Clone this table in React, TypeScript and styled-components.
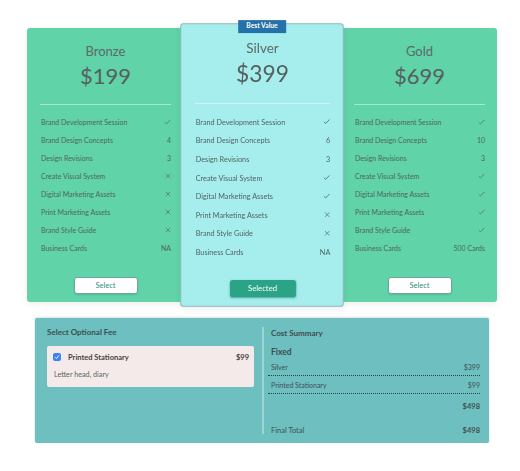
import React from "react";
import styled, { createGlobalStyle } from "styled-components";

const Global = createGlobalStyle`
  html, body { margin: 0; padding: 0; background: #fff; }
  body { font-family: Lato, "Open Sans", "Liberation Sans", sans-serif; }
  * { box-sizing: border-box; }
`;

const Page = styled.div`
  width: 520px;
  padding: 28px 23px 0 27px;
  display: flex;
  flex-direction: column;
`;

const Cards = styled.div`
  display: flex;
  width: 470px;
`;

const Card = styled.div<{ $featured?: boolean }>`
  position: relative;
  flex: 1 1 0;
  height: 274px;
  display: flex;
  flex-direction: column;
  padding: 0 12px 8px 13px;
  border-radius: 3px;
  background: ${(p) => (p.$featured ? "#a6edee" : "#60d3a9")};
  border: ${(p) => (p.$featured ? "1px solid #93b8bb" : "none")};
  box-shadow: 0 2px 6px rgba(0, 0, 0, 0.07);
  transform: ${(p) => (p.$featured ? "scale(1.035)" : "none")};
  z-index: ${(p) => (p.$featured ? 2 : 1)};
`;

const Badge = styled.div`
  position: absolute;
  top: -4px;
  left: 50%;
  transform: translateX(-50%);
  width: 46px;
  height: 12px;
  background: #2472a9;
  color: #fff;
  font-size: 6.5px;
  font-weight: 700;
  line-height: 12px;
  text-align: center;
`;

const Header = styled.div`
  display: flex;
  flex-direction: column;
  align-items: center;
  padding-top: 14px;
  padding-bottom: 13px;
  border-bottom: 1px solid rgba(255, 255, 255, 0.45);
`;

const Title = styled.div`
  font-size: 13px;
  line-height: 18px;
  color: #5b6a66;
`;

const Price = styled.div`
  font-size: 22px;
  line-height: 30px;
  margin-top: 1px;
  color: #56605e;
`;

const Features = styled.div`
  display: flex;
  flex-direction: column;
  padding-top: 8px;
`;

const Row = styled.div`
  display: flex;
  justify-content: space-between;
  align-items: center;
  height: 18px;
  font-size: 7px;
  color: #50665e;
  padding-left: 1px;
`;

const Value = styled.span`
  display: flex;
  align-items: center;
  justify-content: flex-end;
  min-width: 10px;
  color: #50665e;
`;

const ButtonRow = styled.div`
  margin-top: auto;
  display: flex;
  justify-content: center;
`;

const SelectButton = styled.button<{ $active?: boolean }>`
  width: 64px;
  height: 17px;
  border-radius: 3px;
  font-family: inherit;
  font-size: 7.5px;
  padding: 0;
  cursor: pointer;
  background: ${(p) => (p.$active ? "#2ba387" : "#fff")};
  color: ${(p) => (p.$active ? "#fff" : "#2a8f7d")};
  border: 1px solid ${(p) => (p.$active ? "#2ba387" : "#6aa8a0")};
  box-shadow: 0 1px 2px rgba(0, 0, 0, 0.12);
`;

const Panel = styled.div`
  margin: 16px 0 0 8px;
  width: 454px;
  height: 125px;
  background: #6dbfc0;
  border-radius: 2px;
  box-shadow: 0 -1px 2px rgba(0, 0, 0, 0.12), 0 1px 3px rgba(0, 0, 0, 0.08);
  padding: 8px 9px 8px 12px;
  display: grid;
  grid-template-columns: 207px 1fr;
  column-gap: 8px;
`;

const LeftCol = styled.div`
  display: flex;
  flex-direction: column;
`;

const RightCol = styled.div`
  display: flex;
  flex-direction: column;
  border-left: 2px solid rgba(255, 255, 255, 0.35);
  padding-left: 7px;
  margin-top: 1px;
  margin-bottom: 1px;
`;

const SectionTitle = styled.div`
  font-size: 8px;
  font-weight: 700;
  line-height: 12px;
  color: #3d4e4d;
`;

const FeeCard = styled.div`
  margin-top: 8px;
  background: #f4eaea;
  border-radius: 2px;
  padding: 4px 5px 4px 6px;
  height: 41px;
  display: flex;
  flex-direction: column;
`;

const FeeTop = styled.div`
  display: flex;
  align-items: center;
  height: 14px;
  font-size: 7.5px;
  font-weight: 700;
  color: #444;
`;

const Check = styled.span`
  width: 8px;
  height: 8px;
  border-radius: 2px;
  background: #3b82f6;
  display: inline-flex;
  align-items: center;
  justify-content: center;
  margin-right: 7px;
`;

const FeeName = styled.span`
  flex: 1;
`;

const FeeDesc = styled.div`
  margin-top: 6px;
  font-size: 7.2px;
  color: #5a6464;
  padding-left: 1px;
`;

const Fixed = styled.div`
  margin-top: 7px;
  font-size: 8.5px;
  font-weight: 700;
  line-height: 12px;
  color: #3d4e4d;
`;

const LineRow = styled.div<{ $h: number }>`
  display: flex;
  justify-content: space-between;
  align-items: flex-end;
  height: ${(p) => p.$h}px;
  padding: 0 0 3px 3px;
  margin-left: -3px;
  font-size: 7px;
  line-height: 9px;
  color: #3f5252;
  border-bottom: 1px dotted #2d4242;
`;

const TotalRow = styled.div<{ $h: number }>`
  display: flex;
  justify-content: space-between;
  align-items: center;
  height: ${(p) => p.$h}px;
  font-size: 7.5px;
  line-height: 9px;
  color: #3f5252;
`;

const Amount = styled.span`
  font-weight: 700;
`;

const Spacer = styled.div`
  flex: 1;
`;

const CheckIcon = () => (
  <svg width="7" height="6" viewBox="0 0 7 6">
    <path d="M0.8 3.2 L2.6 4.9 L6.2 1" fill="none" stroke="#5e7a70" strokeWidth="0.9" />
  </svg>
);

const CrossIcon = () => (
  <svg width="6" height="6" viewBox="0 0 6 6">
    <path d="M0.8 0.8 L5.2 5.2 M5.2 0.8 L0.8 5.2" fill="none" stroke="#5e7a70" strokeWidth="0.8" />
  </svg>
);

type V = "check" | "cross" | string;

const featureNames = [
  "Brand Development Session",
  "Brand Design Concepts",
  "Design Revisions",
  "Create Visual System",
  "Digital Marketing Assets",
  "Print Marketing Assets",
  "Brand Style Guide",
  "Business Cards",
];

const plans: { name: string; price: string; values: V[]; featured?: boolean }[] = [
  { name: "Bronze", price: "$199", values: ["check", "4", "3", "cross", "cross", "cross", "cross", "NA"] },
  { name: "Silver", price: "$399", values: ["check", "6", "3", "check", "check", "cross", "cross", "NA"], featured: true },
  { name: "Gold", price: "$699", values: ["check", "10", "3", "check", "check", "check", "check", "500 Cards"] },
];

const renderValue = (v: V) =>
  v === "check" ? <CheckIcon /> : v === "cross" ? <CrossIcon /> : v;

export default function App() {
  return (
    <>
      <Global />
      <Page>
        <Cards>
          {plans.map((p) => (
            <Card key={p.name} $featured={p.featured}>
              {p.featured && <Badge>Best Value</Badge>}
              <Header>
                <Title>{p.name}</Title>
                <Price>{p.price}</Price>
              </Header>
              <Features>
                {featureNames.map((f, i) => (
                  <Row key={f}>
                    <span>{f}</span>
                    <Value>{renderValue(p.values[i])}</Value>
                  </Row>
                ))}
              </Features>
              <ButtonRow>
                <SelectButton $active={p.featured}>{p.featured ? "Selected" : "Select"}</SelectButton>
              </ButtonRow>
            </Card>
          ))}
        </Cards>
        <Panel>
          <LeftCol>
            <SectionTitle>Select Optional Fee</SectionTitle>
            <FeeCard>
              <FeeTop>
                <Check>
                  <svg width="6" height="6" viewBox="0 0 6 6">
                    <path d="M1 3.2 L2.4 4.6 L5 1.4" fill="none" stroke="#fff" strokeWidth="1" />
                  </svg>
                </Check>
                <FeeName>Printed Stationary</FeeName>
                <span>$99</span>
              </FeeTop>
              <FeeDesc>Letter head, diary</FeeDesc>
            </FeeCard>
          </LeftCol>
          <RightCol>
            <SectionTitle>Cost Summary</SectionTitle>
            <Fixed>Fixed</Fixed>
            <LineRow $h={18}>
              <span>Silver</span>
              <span>$399</span>
            </LineRow>
            <LineRow $h={18}>
              <span>Printed Stationary</span>
              <span>$99</span>
            </LineRow>
            <TotalRow $h={25}>
              <span />
              <Amount>$498</Amount>
            </TotalRow>
            <Spacer />
            <TotalRow $h={8}>
              <span>Final Total</span>
              <Amount>$498</Amount>
            </TotalRow>
          </RightCol>
        </Panel>
      </Page>
    </>
  );
}
